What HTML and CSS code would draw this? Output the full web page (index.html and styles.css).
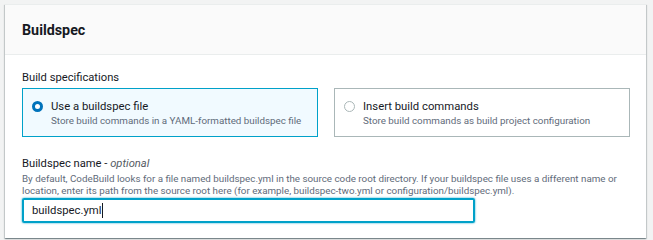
FILE: index.html
```html
<!DOCTYPE html>
<html lang="en">

<head>
    <meta charset="UTF-8">
    <title>Buildspec</title>
    <link rel="stylesheet" href="styles.css">
</head>

<body>
    <div class="container">
        <div class="container-header">
            <h2 class="title">Buildspec</h2>
        </div>

        <div class="container-body">
            <div class="field">
                <div class="field-label">Build specifications</div>
                <div class="tiles">
                    <label class="tile selected">
                        <span class="radio checked"></span>
                        <span class="tile-text">
                            <span class="tile-label">Use a buildspec file</span>
                            <span class="tile-desc">Store build commands in a YAML-formatted buildspec file</span>
                        </span>
                    </label>
                    <label class="tile">
                        <span class="radio"></span>
                        <span class="tile-text">
                            <span class="tile-label">Insert build commands</span>
                            <span class="tile-desc">Store build commands as build project configuration</span>
                        </span>
                    </label>
                </div>
            </div>

            <div class="field">
                <div class="field-label">Buildspec name - <i>optional</i></div>
                <div class="field-desc">By default, CodeBuild looks for a file named buildspec.yml in the source code root directory. If your buildspec file uses a different name or location, enter its path from the source root here (for example, buildspec-two.yml or configuration/buildspec.yml).</div>
                <div class="input-box"><span>buildspec.yml</span><span class="caret"></span></div>
            </div>
        </div>
    </div>
</body>

</html>
```

FILE: styles.css
```css
* {
    margin: 0;
    padding: 0;
    box-sizing: border-box;
}

body {
    background-color: #f2f3f3;
    font-family: Roboto, "Liberation Sans", Arial, sans-serif;
    color: #16191f;
    padding: 4px 7px 0 5px;
    height: 240px;
    overflow: hidden;
}

.container {
    background-color: #fff;
    border-top: 1px solid #eaeded;
    box-shadow: 0 1px 1px 0 rgba(0, 28, 36, 0.3), 1px 1px 1px 0 rgba(0, 28, 36, 0.15), -1px 1px 1px 0 rgba(0, 28, 36, 0.15);
    height: 234px;
}

.container-header {
    background-color: #fafafa;
    border-bottom: 1px solid #eaeded;
    height: 50px;
    padding: 0 17px;
    display: flex;
    align-items: center;
}

.title {
    font-size: 14.3px;
    font-weight: 700;
}

.container-body {
    padding: 15px 16px 0 17px;
}

.field {
    margin-bottom: 19px;
}

.field-label {
    font-size: 11.2px;
    line-height: 15px;
    margin-bottom: 3px;
}

.field-label i {
    color: #545b64;
}

.tiles {
    display: flex;
    gap: 16px;
}

.tile {
    flex: 1;
    display: flex;
    align-items: flex-start;
    gap: 8px;
    border: 1px solid #aab7b8;
    height: 49px;
    padding: 10px 4px 0 9px;
}

.tile.selected {
    border-color: #00a1c9;
    background-color: #f1faff;
}

.radio {
    width: 11px;
    height: 11px;
    border-radius: 50%;
    border: 1px solid #aab7b8;
    background: #fff;
    margin-top: 2px;
    flex-shrink: 0;
}

.radio.checked {
    border: 3.5px solid #0073bb;
}

.tile-text {
    display: flex;
    flex-direction: column;
}

.tile-label {
    font-size: 11.3px;
    line-height: 15px;
}

.tile-desc {
    font-size: 9.8px;
    line-height: 13px;
    color: #5f6b7a;
    white-space: nowrap;
}

.field-desc {
    font-size: 9.8px;
    line-height: 12px;
    color: #5f6b7a;
    margin-top: -1px;
    margin-bottom: 1px;
}

.input-box {
    width: 453px;
    height: 25px;
    border: 2px solid #00a1c9;
    border-radius: 2px;
    box-shadow: 0 0 2px #00a1c9;
    padding: 0 8px;
    font-size: 11.3px;
    display: flex;
    align-items: center;
}

.caret {
    width: 1px;
    height: 15px;
    background-color: #16191f;
}
```
